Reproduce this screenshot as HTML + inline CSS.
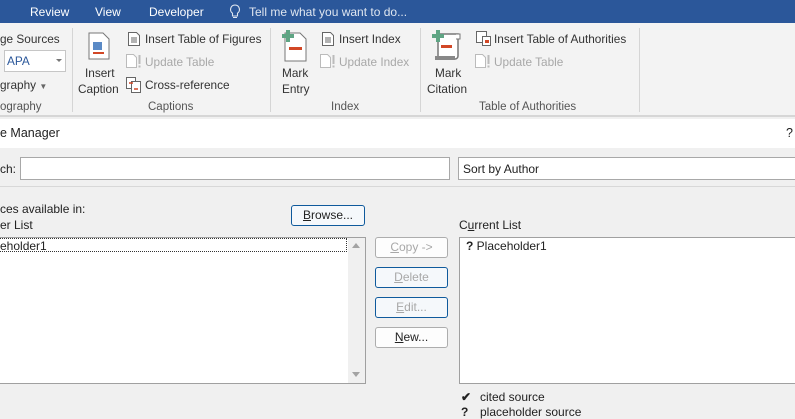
<!DOCTYPE html><html><head><style>
*{margin:0;padding:0;box-sizing:border-box}
body{width:795px;height:415px;overflow:hidden;font-family:"Liberation Sans",sans-serif;font-size:12px;color:#222;position:relative;background:#f0f0f0}
.a{position:absolute;white-space:nowrap}
.tab{color:#fff;font-size:12px;top:5px}
.rb{color:#333;font-size:11.8px}
.dis{color:#a8a8a8}
.sep{position:absolute;top:28px;height:84px;width:1px;background:#d5d5d5}
.gl{color:#555;font-size:11.5px;top:101px}
.btn{position:absolute;background:#fdfdfd;border:1px solid #adadad;border-radius:3px;text-align:center;line-height:19px;font-size:12px}
.blue{border-color:#0f5a9c;background:#f5f8fb}
</style></head><body>
<div class="a" style="left:0;top:0;width:795px;height:23px;background:#2b579a"></div>
<div class="a tab" style="left:30px">Review</div>
<div class="a tab" style="left:95px">View</div>
<div class="a tab" style="left:149px">Developer</div>
<svg class="a" style="left:229px;top:4px" width="12" height="15"><path d="M6 1a4.5 4.5 0 0 0-2.5 8.2V12h5V9.2A4.5 4.5 0 0 0 6 1zM4 13.5h4" fill="none" stroke="#dfe6f0" stroke-width="1.1"/></svg>
<div class="a tab" style="left:249px;color:#dfe6f0">Tell me what you want to do...</div>
<div class="a" style="left:0;top:23px;width:795px;height:94px;background:#f3f3f3;border-bottom:2px solid #d6d6d6"></div>
<div class="a rb" style="left:0;top:32px">ge Sources</div>
<div class="a" style="left:4px;top:50px;width:62px;height:22px;background:#fff;border:1px solid #c6c6c6"></div>
<div class="a rb" style="left:7px;top:54px;color:#2b579a">APA</div>
<div class="a" style="left:56px;top:59px;border:3px solid transparent;border-top:3px solid #777"></div>
<div class="a rb" style="left:0;top:78px">graphy <span style="font-size:8px;color:#666">▼</span></div>
<div class="a gl" style="left:0">ography</div>
<div class="sep" style="left:72px"></div>
<svg class="a" style="left:88px;top:32px" width="22" height="28"><path d="M1 1h14l6 6v20H1z" fill="#fff" stroke="#777"/><rect x="5" y="10" width="9" height="8" fill="#5b8ac6"/><rect x="5" y="20" width="11" height="2" fill="#d24726"/></svg>
<div class="a rb" style="left:85px;top:66px">Insert</div>
<div class="a rb" style="left:78px;top:82px">Caption</div>
<svg class="a" style="left:128px;top:32px" width="12" height="14"><path d="M.5.5h8l3 3v10H.5z" fill="#fff" stroke="#666"/><path d="M3 6h6M3 8h6M3 10h6" stroke="#666"/></svg>
<div class="a rb" style="left:145px;top:32px">Insert Table of Figures</div>
<svg class="a" style="left:126px;top:54px" width="16" height="14"><path d="M.5.5h7l3 3v10H.5z" fill="#fff" stroke="#bbb"/><path d="M13.5 1v9M13.5 11.5v2" stroke="#bbb" stroke-width="2"/></svg>
<div class="a rb dis" style="left:145px;top:55px">Update Table</div>
<svg class="a" style="left:126px;top:77px" width="16" height="16"><rect x=".5" y=".5" width="9" height="11" fill="#fff" stroke="#666"/><rect x="5.5" y="4.5" width="9" height="11" fill="#fff" stroke="#666"/><path d="M3 6h4M8 12h4" stroke="#d24726" stroke-width="1.5"/></svg>
<div class="a rb" style="left:145px;top:78px">Cross-reference</div>
<div class="a gl" style="left:148px">Captions</div>
<div class="sep" style="left:270px"></div>
<svg class="a" style="left:280px;top:30px" width="28" height="32"><path d="M5 3h15l6 6v22H5z" fill="#fff" stroke="#777"/><path d="M8 0v12M2 6h12" stroke="#5fa584" stroke-width="4"/><rect x="9" y="17" width="13" height="3" fill="#d24726"/></svg>
<div class="a rb" style="left:282px;top:66px">Mark</div>
<div class="a rb" style="left:282px;top:82px">Entry</div>
<svg class="a" style="left:322px;top:32px" width="12" height="14"><path d="M.5.5h8l3 3v10H.5z" fill="#fff" stroke="#666"/><path d="M3 6h6M3 8h6M3 10h6" stroke="#666"/></svg>
<div class="a rb" style="left:339px;top:32px">Insert Index</div>
<svg class="a" style="left:320px;top:54px" width="16" height="14"><path d="M.5.5h7l3 3v10H.5z" fill="#fff" stroke="#bbb"/><path d="M13.5 1v9M13.5 11.5v2" stroke="#bbb" stroke-width="2"/></svg>
<div class="a rb dis" style="left:339px;top:55px">Update Index</div>
<div class="a gl" style="left:331px">Index</div>
<div class="sep" style="left:420px"></div>
<svg class="a" style="left:430px;top:30px" width="34" height="32"><path d="M8 4h20v22a3 3 0 0 1-3 3H8z" fill="#fff" stroke="#777" stroke-width="1.5"/><path d="M26 4h4v5h-4" fill="#fff" stroke="#777"/><path d="M5 26h20v4H5z" fill="#888"/><path d="M8 0v12M2 6h12" stroke="#5fa584" stroke-width="4"/><rect x="11" y="15" width="11" height="3" fill="#d24726"/></svg>
<div class="a rb" style="left:435px;top:66px">Mark</div>
<div class="a rb" style="left:427px;top:82px">Citation</div>
<svg class="a" style="left:476px;top:31px" width="16" height="15"><rect x=".5" y=".5" width="10" height="11" fill="#fff" stroke="#666"/><rect x="6.5" y="5.5" width="8" height="9" fill="#fff" stroke="#666"/><rect x="9" y="9" width="4" height="3" fill="#d24726"/></svg>
<div class="a rb" style="left:494px;top:32px">Insert Table of Authorities</div>
<svg class="a" style="left:475px;top:54px" width="16" height="14"><path d="M.5.5h7l3 3v10H.5z" fill="#fff" stroke="#bbb"/><path d="M13.5 1v9M13.5 11.5v2" stroke="#bbb" stroke-width="2"/></svg>
<div class="a rb dis" style="left:494px;top:55px">Update Table</div>
<div class="a gl" style="left:479px">Table of Authorities</div>
<div class="sep" style="left:639px"></div>
<div class="a" style="left:0;top:119px;width:795px;height:29px;background:#fff"></div>
<div class="a" style="left:0;top:126px;font-size:12.5px">e Manager</div>
<div class="a" style="left:786px;top:126px;font-size:12.5px">?</div>
<div class="a" style="left:0;top:162px">ch:</div>
<div class="a" style="left:20px;top:157px;width:430px;height:23px;background:#fff;border:1px solid #a8a8a8"></div>
<div class="a" style="left:458px;top:157px;width:340px;height:23px;background:#fff;border:1px solid #a8a8a8"></div>
<div class="a" style="left:463px;top:162px">Sort by Author</div>
<div class="a" style="left:0;top:186px;width:795px;height:1px;background:#d8d8d8"></div>
<div class="a" style="left:0;top:202px">ces available in:</div>
<div class="a" style="left:0;top:218px">er List</div>
<div class="btn blue" style="left:291px;top:205px;width:74px;height:21px"><u>B</u>rowse...</div>
<div class="a" style="left:459px;top:218px">C<u>u</u>rrent List</div>
<div class="a" style="left:0;top:237px;width:366px;height:147px;background:#fff;border:1px solid #a0a0a0;border-left:none"></div>
<div class="a" style="left:348px;top:238px;width:17px;height:145px;background:#f0f0f0"></div>
<div class="a" style="left:352px;top:243px;border:4.5px solid transparent;border-bottom:5px solid #a3a3a3;border-top:0"></div>
<div class="a" style="left:352px;top:372px;border:4.5px solid transparent;border-top:5px solid #a3a3a3;border-bottom:0"></div>
<div class="a" style="left:0;top:238px;width:347px;height:14px;border:1px dotted #333;border-left:none"></div>
<div class="a" style="left:0;top:239px">eholder1</div>
<div class="btn dis" style="left:375px;top:237px;width:73px;height:21px"><u>C</u>opy -&gt;</div>
<div class="btn blue dis" style="left:375px;top:267px;width:73px;height:21px"><u>D</u>elete</div>
<div class="btn blue dis" style="left:375px;top:297px;width:73px;height:21px"><u>E</u>dit...</div>
<div class="btn" style="left:375px;top:327px;width:73px;height:21px;color:#222"><u>N</u>ew...</div>
<div class="a" style="left:459px;top:237px;width:340px;height:147px;background:#fff;border:1px solid #a0a0a0"></div>
<div class="a" style="left:466px;top:239px"><b>?</b> Placeholder1</div>
<div class="a" style="left:461px;top:390px"><b>✔</b></div>
<div class="a" style="left:480px;top:390px">cited source</div>
<div class="a" style="left:461px;top:405px"><b>?</b></div>
<div class="a" style="left:480px;top:405px">placeholder source</div>
</body></html>
